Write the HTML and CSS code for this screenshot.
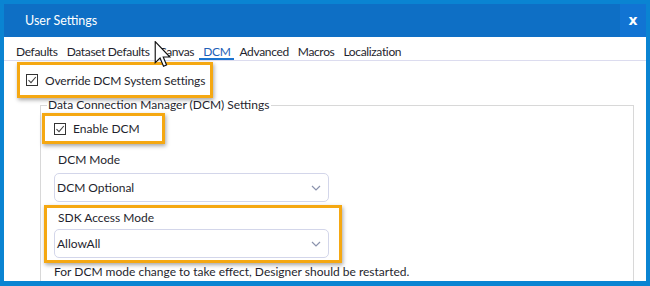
FILE: index.html
```html
<!DOCTYPE html>
<html>
<head>
<meta charset="utf-8">
<link rel="stylesheet" href="styles.css">
</head>
<body>
<div class="window">
  <div class="titlebar">
    <span class="title">User Settings</span>
    <span class="close">x</span>
  </div>
  <div class="content">
    <div class="tabs">
      <span class="tab">Defaults</span>
      <span class="tab">Dataset Defaults</span>
      <span class="tab">Canvas</span>
      <span class="tab active">DCM</span>
      <span class="tab">Advanced</span>
      <span class="tab">Macros</span>
      <span class="tab">Localization</span>
    </div>
    <div class="hl hl-override">
      <span class="check"><svg viewBox="0 0 12 12" width="12" height="12"><path d="M2.5 6.2 L5 8.7 L9.8 3" fill="none" stroke="#444" stroke-width="1.1"/></svg></span>
      <span>Override DCM System Settings</span>
    </div>
    <fieldset class="group">
      <legend>Data Connection Manager (DCM) Settings</legend>
      <div class="hl hl-enable">
        <span class="check"><svg viewBox="0 0 12 12" width="12" height="12"><path d="M2.5 6.2 L5 8.7 L9.8 3" fill="none" stroke="#444" stroke-width="1.1"/></svg></span>
        <span>Enable DCM</span>
      </div>
      <div class="field">
        <div class="label">DCM Mode</div>
        <div class="select"><span>DCM Optional</span><svg class="chev" viewBox="0 0 10 6" width="10" height="6"><path d="M1 1 L5 5 L9 1" fill="none" stroke="#8b93ad" stroke-width="1.2"/></svg></div>
      </div>
      <div class="hl hl-sdk">
        <div class="label">SDK Access Mode</div>
        <div class="select"><span>AllowAll</span><svg class="chev" viewBox="0 0 10 6" width="10" height="6"><path d="M1 1 L5 5 L9 1" fill="none" stroke="#8b93ad" stroke-width="1.2"/></svg></div>
      </div>
      <div class="note">For DCM mode change to take effect, Designer should be restarted.</div>
    </fieldset>
  </div>
  <svg class="cursor" viewBox="0 0 14 22" width="19" height="28"><path d="M0.5 0.5 L0.5 17 L4.3 13.4 L7 19.8 L9.4 18.8 L6.8 12.6 L12 12.6 Z" fill="#fff" stroke="#111" stroke-width="0.9" stroke-linejoin="miter"/></svg>
</div>
</body>
</html>
```
FILE: styles.css
```css
html, body {
  margin: 0;
  padding: 0;
}
body {
  width: 650px;
  height: 286px;
  overflow: hidden;
  font-family: Lato, "Noto Sans", sans-serif;
  font-size: 12px;
  color: #1f1f2e;
}
.window {
  position: relative;
  box-sizing: border-box;
  width: 650px;
  height: 286px;
  background: #0a84d2;
  padding: 4px 4px 5px 4px;
  display: flex;
  flex-direction: column;
}
.titlebar {
  height: 33px;
  flex: none;
  background: #0e6fc5;
  display: flex;
  align-items: center;
  justify-content: space-between;
  color: #fff;
}
.title {
  padding-left: 21px;
  font-size: 12.5px;
}
.close {
  width: 26px;
  height: 33px;
  background: #1174d3;
  display: flex;
  align-items: center;
  justify-content: center;
  font-weight: bold;
  font-size: 14px;
  font-family: "DejaVu Sans", sans-serif;
  line-height: 1;
  padding-bottom: 2px;
  box-sizing: border-box;
}
.content {
  flex: 1;
  background: #fff;
  overflow: hidden;
  display: flex;
  flex-direction: column;
  align-items: flex-start;
}
.tabs {
  align-self: stretch;
  flex: none;
  display: flex;
  gap: 9px;
  padding-left: 12px;
  height: 24px;
  box-sizing: border-box;
  border-bottom: 1px solid #dcdcef;
}
.tab {
  height: 23px;
  padding-top: 8px;
  line-height: 13px;
  box-sizing: border-box;
  white-space: nowrap;
  letter-spacing: -0.35px;
}
.tab.active {
  color: #1e5fb8;
  border-bottom: 2px solid #1b74d0;
  padding-left: 4px;
  padding-right: 4px;
  margin: 0 -4px;
}
.hl {
  border: 3px solid #f5a812;
  box-shadow: 1px 2px 4px rgba(0,0,0,0.35);
  box-sizing: border-box;
  background: #fff;
}
.hl-override {
  flex: none;
  margin: 1px 0 0 13px;
  width: 196px;
  height: 36px;
  display: flex;
  align-items: center;
  gap: 7px;
  padding-left: 6px;
  white-space: nowrap;
  letter-spacing: -0.15px;
}
.check {
  flex: none;
  width: 12px;
  height: 12px;
  border: 1px solid #333;
  box-sizing: border-box;
  display: flex;
  align-items: center;
  justify-content: center;
  overflow: hidden;
}
.check svg {
  flex: none;
}
.group {
  margin: 0 0 0 36px;
  padding: 0;
  width: 594px;
  box-sizing: border-box;
  flex: 1;
  border: 1px solid #d8d8d8;
  border-bottom: none;
  min-width: 0;
}
.group legend {
  margin-left: 6px;
  padding: 0 2px 0 1px;
  line-height: 14px;
}
.hl-enable {
  margin: 1px 0 0 1px;
  width: 123px;
  height: 31px;
  display: flex;
  align-items: center;
  gap: 7px;
  padding-left: 9px;
}
.field {
  margin: 9px 0 0 13px;
}
.label {
  padding-left: 4px;
  line-height: 14px;
}
.select {
  margin-top: 6px;
  width: 275px;
  height: 29px;
  box-sizing: border-box;
  border: 1px solid #d3d6ea;
  border-radius: 5px;
  display: flex;
  align-items: center;
  justify-content: space-between;
  padding: 0 7px 0 2px;
}
.hl-sdk {
  margin: 3px 0 0 3px;
  width: 298px;
  height: 58px;
  padding: 3px 0 0 7px;
}
.hl-sdk .select {
  margin-top: 4px;
}
.note {
  margin: 2px 0 0 13px;
  line-height: 14px;
  white-space: nowrap;
}
.cursor {
  position: absolute;
  left: 154px;
  top: 41px;
}
```
